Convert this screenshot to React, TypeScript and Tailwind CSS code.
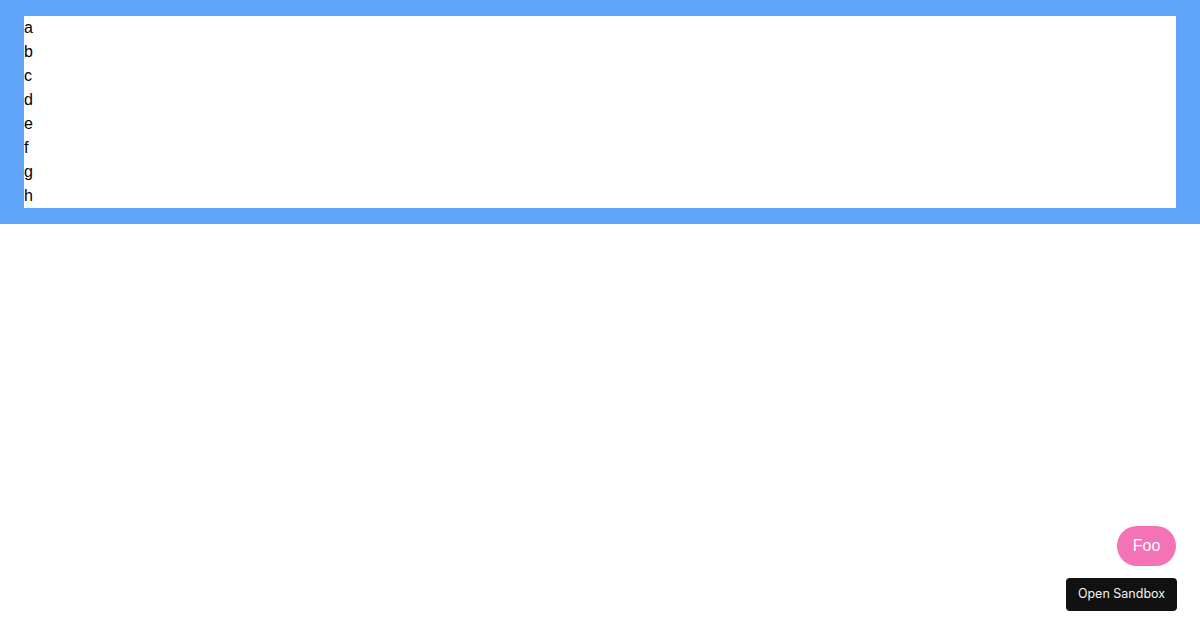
import React from "react";

export default function App() {
  const items = ["a", "b", "c", "d", "e", "f", "g", "h"];
  return (
    <div className="min-h-[630px] bg-white" style={{ fontFamily: '"Liberation Sans", Arial, sans-serif' }}>
      <div className="bg-[#60a5fa] px-6 py-4">
        <div className="bg-white text-black text-base leading-6">
          {items.map((i) => (
            <div key={i}>{i}</div>
          ))}
        </div>
      </div>
      <button className="fixed right-6 bottom-16 h-10 w-[59px] rounded-full bg-[#f472b6] text-base text-white">
        Foo
      </button>
      <button
        className="fixed right-[23px] bottom-[19px] h-[33px] w-[111px] rounded bg-[#111111] text-[12.5px] text-[#f3f4f6]"
        style={{ fontFamily: "Inter, sans-serif" }}
      >
        Open Sandbox
      </button>
    </div>
  );
}
